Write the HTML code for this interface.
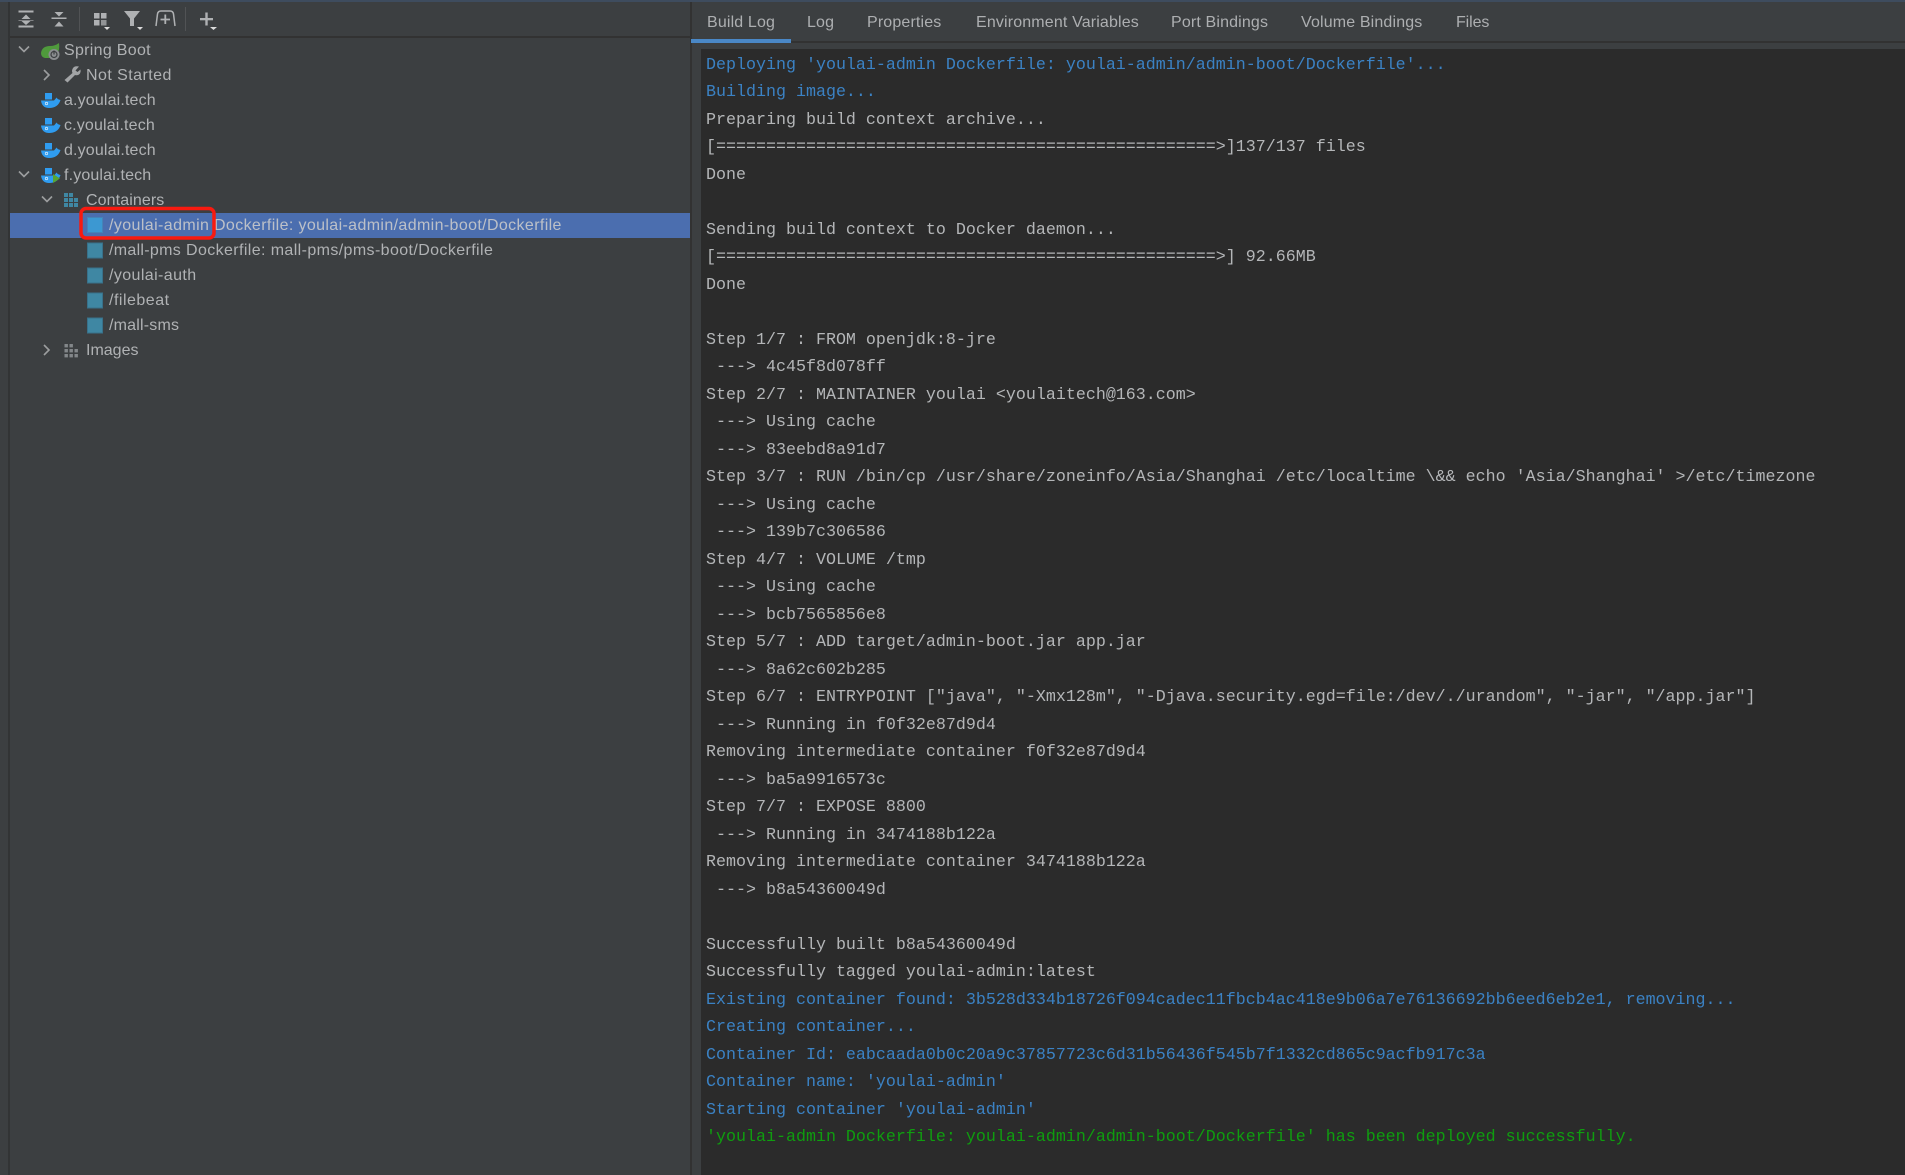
<!DOCTYPE html>
<html><head><meta charset="utf-8"><style>
html,body{margin:0;padding:0;background:#3c3f41;width:1905px;height:1175px;overflow:hidden}
body{position:relative;font-family:"Liberation Sans",sans-serif;color:#b4b6b8}
.a{position:absolute}
.t{position:absolute;font-size:16px;letter-spacing:.3px;line-height:24px;white-space:pre;color:#b0b2b4}
.tab{position:absolute;top:10.5px;font-size:16px;letter-spacing:.15px;line-height:24px;white-space:pre;color:#adafb1}
#log{position:absolute;left:701px;top:49px;width:1204px;height:1126px;background:#2b2b2b}
#log pre{margin:0;position:absolute;left:5px;top:2.8px;font-family:"Liberation Mono",monospace;font-size:16.667px;line-height:27.5px;color:#b4b6b8}
.b{color:#3b82c4}.g{color:#0f9d0f}
svg{position:absolute;left:0;top:0}
</style></head><body>
<div class="a" style="left:0;top:0;width:1905px;height:2px;background:#3e4c5e"></div>
<div class="a" style="left:8px;top:2px;width:2px;height:1173px;background:#323435"></div>
<div class="a" style="left:10px;top:36px;width:680px;height:2px;background:#323232"></div>
<div class="a" style="left:690px;top:2px;width:2px;height:1173px;background:#323232"></div>
<div class="a" style="left:692px;top:41px;width:1213px;height:2px;background:#323232"></div>
<div class="a" style="left:691px;top:39px;width:100px;height:4px;background:#4a88c7"></div>
<div class="a" style="left:10px;top:213px;width:680px;height:25px;background:#4b6eaf"></div>
<div id="log"><pre><span class="b">Deploying 'youlai-admin Dockerfile: youlai-admin/admin-boot/Dockerfile'...
Building image...</span>
Preparing build context archive...
[==================================================&gt;]137/137 files
Done

Sending build context to Docker daemon...
[==================================================&gt;] 92.66MB
Done

Step 1/7 : FROM openjdk:8-jre
 ---&gt; 4c45f8d078ff
Step 2/7 : MAINTAINER youlai &lt;youlaitech@163.com&gt;
 ---&gt; Using cache
 ---&gt; 83eebd8a91d7
Step 3/7 : RUN /bin/cp /usr/share/zoneinfo/Asia/Shanghai /etc/localtime \&amp;&amp; echo 'Asia/Shanghai' &gt;/etc/timezone
 ---&gt; Using cache
 ---&gt; 139b7c306586
Step 4/7 : VOLUME /tmp
 ---&gt; Using cache
 ---&gt; bcb7565856e8
Step 5/7 : ADD target/admin-boot.jar app.jar
 ---&gt; 8a62c602b285
Step 6/7 : ENTRYPOINT ["java", "-Xmx128m", "-Djava.security.egd=file:/dev/./urandom", "-jar", "/app.jar"]
 ---&gt; Running in f0f32e87d9d4
Removing intermediate container f0f32e87d9d4
 ---&gt; ba5a9916573c
Step 7/7 : EXPOSE 8800
 ---&gt; Running in 3474188b122a
Removing intermediate container 3474188b122a
 ---&gt; b8a54360049d

Successfully built b8a54360049d
Successfully tagged youlai-admin:latest
<span class="b">Existing container found: 3b528d334b18726f094cadec11fbcb4ac418e9b06a7e76136692bb6eed6eb2e1, removing...
Creating container...
Container Id: eabcaada0b0c20a9c37857723c6d31b56436f545b7f1332cd865c9acfb917c3a
Container name: 'youlai-admin'
Starting container 'youlai-admin'</span>
<span class="g">'youlai-admin Dockerfile: youlai-admin/admin-boot/Dockerfile' has been deployed successfully.</span></pre></div>

<span class="tab" style="left:707px">Build Log</span>
<span class="tab" style="left:807px">Log</span>
<span class="tab" style="left:867px">Properties</span>
<span class="tab" style="left:976px">Environment Variables</span>
<span class="tab" style="left:1171px">Port Bindings</span>
<span class="tab" style="left:1301px">Volume Bindings</span>
<span class="tab" style="left:1456px;letter-spacing:-.1px">Files</span>

<span class="t" style="left:64px;top:39px">Spring Boot</span>
<span class="t" style="left:86px;top:64px;letter-spacing:.45px">Not Started</span>
<span class="t" style="left:64px;top:89px;letter-spacing:.15px">a.youlai.tech</span>
<span class="t" style="left:64px;top:114px;letter-spacing:.15px">c.youlai.tech</span>
<span class="t" style="left:64px;top:139px;letter-spacing:.15px">d.youlai.tech</span>
<span class="t" style="left:64px;top:164px;letter-spacing:.15px">f.youlai.tech</span>
<span class="t" style="left:86px;top:189px;letter-spacing:.1px">Containers</span>
<span class="t" style="left:109px;top:214px;color:#bcc0c8;letter-spacing:.4px">/youlai-admin</span>
<span class="t" style="left:214px;top:214px;color:#bcc0c8;letter-spacing:.37px">Dockerfile: youlai-admin/admin-boot/Dockerfile</span>
<span class="t" style="left:109px;top:239px">/mall-pms</span>
<span class="t" style="left:186px;top:239px;letter-spacing:.39px">Dockerfile: mall-pms/pms-boot/Dockerfile</span>
<span class="t" style="left:109px;top:264px;letter-spacing:.4px">/youlai-auth</span>
<span class="t" style="left:109px;top:289px;letter-spacing:.5px">/filebeat</span>
<span class="t" style="left:109px;top:314px;letter-spacing:.2px">/mall-sms</span>
<span class="t" style="left:86px;top:339px;letter-spacing:0">Images</span>

<svg width="700" height="400" viewBox="0 0 700 400" xmlns="http://www.w3.org/2000/svg">
<defs>
<g id="whale">
<rect x="45" y="93" width="7" height="6.5" fill="#2f9cf0"/>
<path d="M41 100.5H54Q55.5 99 56.5 97.5Q57.5 99.5 60.5 100Q58 108 49 108Q42 108 41 100.5Z" fill="#2f9cf0"/>
<circle cx="46.5" cy="103.5" r="1.2" fill="none" stroke="#cfe8fb" stroke-width=".8"/>
</g>
<g id="sq"><rect x="87.5" y="0.5" width="15" height="15" fill="#3f87a3" stroke="#38718a"/></g>
</defs>
<!-- toolbar -->
<g fill="#afb1b3">
<rect x="18.5" y="10.5" width="15" height="2"/><path d="M26 14.5l4.5 4.5h-9z"/><rect x="18.5" y="20" width="15" height="1" opacity=".6"/><path d="M26 26l-4.5 -4h9z" transform="translate(0,-1)"/><rect x="18.5" y="25.5" width="15" height="2"/>
<path d="M59 16.500l-4.500 -4.500h9z"/><rect x="51.500" y="17.500" width="15" height="1.500"/><path d="M59 21.500l4.500 5h-9z"/>
<rect x="94" y="13" width="5.500" height="5.500"/><rect x="101" y="13" width="5.500" height="5.500"/><rect x="94" y="20" width="5.500" height="5.500"/><rect x="101" y="20" width="5.500" height="5.500" opacity=".75"/>
<path d="M124 11h16l-6 7.500v7.500h-4v-7.500z"/>
<rect x="200" y="18" width="13" height="2.300"/><rect x="205.300" y="12.500" width="2.400" height="13"/>
</g>
<path d="M156 26L157.500 14Q158 11 161 11H170Q173 11 173.500 14L175 26" fill="none" stroke="#afb1b3" stroke-width="1.500"/>
<path d="M160.500 19.500H170M165.300 14.500V24" fill="none" stroke="#afb1b3" stroke-width="1.800"/>
<g fill="#dcdcdc"><path d="M104 27h6l-3 3z"/><path d="M137 27h6l-3 3z"/><path d="M210 27h7l-3.500 3z"/></g>
<rect x="79" y="7" width="1" height="24" fill="#515355"/>
<rect x="185" y="7" width="1" height="24" fill="#515355"/>
<!-- chevrons -->
<g fill="none" stroke="#9c9e9f" stroke-width="1.600">
<path d="M19 46.500l5 5 5-5"/>
<path d="M19 171.500l5 5 5-5"/>
<path d="M42 196.500l5 5 5-5"/>
<path d="M44 70l5 5-5 5"/>
<path d="M44 345l5 5-5 5"/>
</g>
<!-- spring -->
<path d="M41 53Q42 46 50 46Q55 46 59 43Q60 50 57 54L50 58H45Q41 57 41 53Z" fill="#4f9a3c"/>
<circle cx="54" cy="54.500" r="5.500" fill="#8a8d8f"/><circle cx="54" cy="54.500" r="3" fill="none" stroke="#3c3f41" stroke-width="1.200"/>
<rect x="53.400" y="50.500" width="1.200" height="4" fill="#3c3f41"/>
<!-- wrench -->
<path d="M79 66.500Q74 65.500 72.500 69Q71.500 71 72.500 73L64.500 80L67.500 82.500L75 75Q78 76 80 73.500Q81 71.500 80.500 69.500L77.500 72L75.500 70.500Z" fill="#a2a4a6"/>
<!-- whales -->
<use href="#whale"/>
<use href="#whale" y="25"/>
<use href="#whale" y="50"/>
<use href="#whale" y="75"/>
<path d="M53 174L60 178.500L53 183Z" fill="#57a532"/>
<!-- containers icon -->
<g fill="#3f87a3">
<rect x="64" y="193" width="4" height="4"/><rect x="69" y="193" width="4" height="4"/>
<rect x="64" y="198" width="4" height="4"/><rect x="69" y="198" width="4" height="4"/><rect x="74" y="198" width="4" height="4"/>
<rect x="64" y="203" width="4" height="4"/><rect x="69" y="203" width="4" height="4"/><rect x="74" y="203" width="4" height="4"/>
</g>
<g fill="#83878a">
<rect x="64.500" y="344" width="3.400" height="3.400"/><rect x="69.500" y="344" width="3.400" height="3.400"/>
<rect x="64.500" y="349" width="3.400" height="3.400"/><rect x="69.500" y="349" width="3.400" height="3.400"/><rect x="74.500" y="349" width="3.400" height="3.400"/>
<rect x="64.500" y="354" width="3.400" height="3.400"/><rect x="69.500" y="354" width="3.400" height="3.400"/><rect x="74.500" y="354" width="3.400" height="3.400"/>
</g>
<!-- container squares -->
<rect x="87.500" y="217.500" width="15" height="15" fill="#3c98d2" stroke="#4484b8"/>
<use href="#sq" y="242.500"/>
<use href="#sq" y="267.500"/>
<use href="#sq" y="292.500"/>
<use href="#sq" y="317.500"/>
<!-- red box -->
<rect x="81" y="208.500" width="133" height="29.500" rx="5" fill="none" stroke="#f81a10" stroke-width="3.500"/>
</svg>
</body></html>
